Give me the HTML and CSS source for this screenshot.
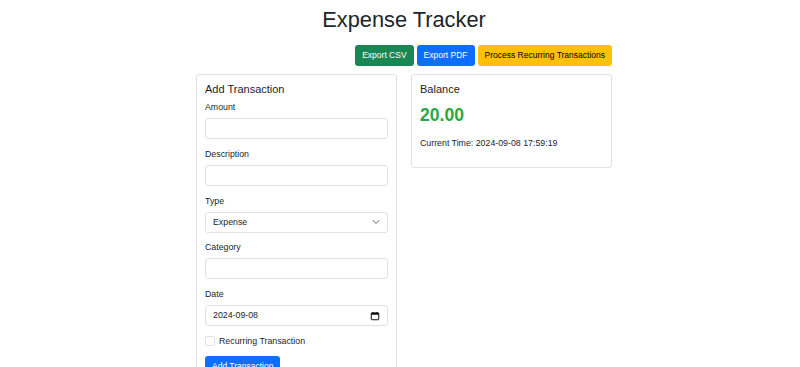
FILE: index.html
```html
<!DOCTYPE html>
<html lang="en">
<head>
<meta charset="utf-8">
<meta name="viewport" content="width=device-width, initial-scale=1">
<title>Expense Tracker</title>
<link rel="stylesheet" href="styles.css">
</head>
<body>
    <div class="container">
        <h1 class="title">Expense Tracker</h1>

        <div class="actions">
            <button class="btn btn-green">Export CSV</button>
            <button class="btn btn-blue">Export PDF</button>
            <button class="btn btn-yellow">Process Recurring Transactions</button>
        </div>

        <div class="row">
            <div class="card">
                <h5 class="card-title">Add Transaction</h5>
                <form>
                    <div class="field">
                        <label for="amount">Amount</label>
                        <input type="text" id="amount" class="input">
                    </div>
                    <div class="field">
                        <label for="description">Description</label>
                        <input type="text" id="description" class="input">
                    </div>
                    <div class="field">
                        <label for="type">Type</label>
                        <div class="input select">
                            <span>Expense</span>
                            <svg width="8" height="8" viewBox="0 0 16 16"><path d="M2 5l6 6 6-6" fill="none" stroke="#343a40" stroke-width="1.6" stroke-linecap="round" stroke-linejoin="round"/></svg>
                        </div>
                    </div>
                    <div class="field">
                        <label for="category">Category</label>
                        <input type="text" id="category" class="input">
                    </div>
                    <div class="field">
                        <label for="date">Date</label>
                        <div class="input date">
                            <span>2024-09-08</span>
                            <svg width="10" height="10" viewBox="0 0 16 16"><rect x="2" y="3" width="12" height="11" rx="1" fill="none" stroke="#111" stroke-width="1.6"/><rect x="2" y="3" width="12" height="3" fill="#111"/><path d="M5 1.5v2M11 1.5v2" stroke="#111" stroke-width="1.6"/></svg>
                        </div>
                    </div>
                    <div class="check">
                        <span class="box"></span>
                        <label>Recurring Transaction</label>
                    </div>
                    <button type="button" class="btn btn-blue">Add Transaction</button>
                </form>
            </div>

            <div class="card card-short">
                <h5 class="card-title">Balance</h5>
                <h2 class="balance">20.00</h2>
                <p class="time">Current Time: 2024-09-08 17:59:19</p>
            </div>
        </div>
    </div>
</body>
</html>
```

FILE: styles.css
```css
body {
    margin: 0 0 0 8px;
    background-color: #fff;
    color: #212529;
    font-family: "Liberation Sans", Arial, Helvetica, sans-serif;
    font-size: 8.8px;
    line-height: 1.5;
}
.container {
    width: 416px;
    margin: 0 auto;
}
.title {
    margin: 7px 0 12px 0;
    font-size: 21.8px;
    font-weight: 400;
    line-height: 26px;
    text-align: center;
}
.actions {
    display: flex;
    justify-content: flex-end;
    gap: 3px;
    margin-bottom: 8px;
}
.btn {
    font-family: inherit;
    font-size: 8.5px;
    line-height: 13.2px;
    padding: 3px 6px;
    border: 1px solid transparent;
    border-radius: 3px;
    color: #fff;
}
.btn-green {
    background-color: #198754;
}
.btn-blue {
    background-color: #0d6efd;
}
.btn-yellow {
    background-color: #ffc107;
    color: #000;
}
.row {
    display: flex;
    gap: 14px;
    align-items: flex-start;
}
.card {
    flex: 1;
    border: 1px solid #dfe1e4;
    border-radius: 3px;
    padding: 7px 8px 8px 8px;
    min-height: 300px;
}
.card-short {
    min-height: 0;
    padding-bottom: 17px;
}
.card-title {
    margin: 0 0 5px 0;
    font-size: 11px;
    font-weight: 500;
    line-height: 14px;
}
.field {
    margin-bottom: 8.5px;
}
.field label {
    display: block;
    margin-bottom: 4px;
}
.input {
    box-sizing: border-box;
    display: flex;
    align-items: center;
    justify-content: space-between;
    width: 100%;
    height: 21px;
    padding: 0 7px;
    border: 1px solid #dee2e6;
    border-radius: 3px;
    font-family: inherit;
    font-size: 8.8px;
    color: #212529;
    background: #fff;
}
.check {
    display: flex;
    align-items: center;
    gap: 4px;
    margin: 6px 0 8px 0;
}
.check .box {
    width: 8px;
    height: 8px;
    border: 1px solid #dee2e6;
    border-radius: 2px;
}
.balance {
    margin: 9px 0 11px 0;
    color: #28a745;
    font-size: 17.6px;
    font-weight: 700;
    line-height: 21px;
}
.time {
    margin: 0;
}
```
